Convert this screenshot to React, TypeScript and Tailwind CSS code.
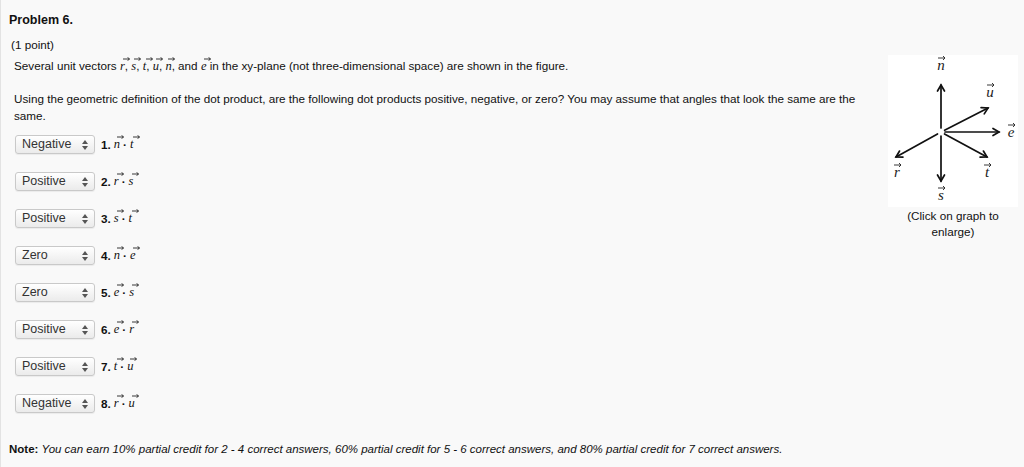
import React from 'react';

const Vec: React.FC<{ l: string }> = ({ l }) => (
  <span className="relative inline-block italic text-[12.5px] leading-none [font-family:'Liberation_Serif',serif]">
    {l}
    <svg className="absolute left-[3px] top-[-3px]" width="7" height="4" viewBox="0 0 7 4">
      <path d="M0 2 H6.5 M4.5 0.3 L6.5 2 L4.5 3.7" stroke="#222" strokeWidth="0.9" fill="none" />
    </svg>
  </span>
);

const Select: React.FC<{ value: string }> = ({ value }) => (
  <div className="relative flex h-[19px] w-[80px] items-center rounded-[3px] border border-[#c9c9c9] bg-gradient-to-b from-white to-[#ebebeb] pl-[6px] text-[12.5px] text-[#333] shadow-[0_1px_1px_rgba(0,0,0,0.06)]">
    {value}
    <svg className="absolute right-[6px] top-[4px]" width="6" height="10" viewBox="0 0 6 10">
      <path d="M0 4 L3 0 L6 4 Z" fill="#555" />
      <path d="M0 6 L3 10 L6 6 Z" fill="#555" />
    </svg>
  </div>
);

const items: [string, string, string][] = [
  ['Negative', 'n', 't'],
  ['Positive', 'r', 's'],
  ['Positive', 's', 't'],
  ['Zero', 'n', 'e'],
  ['Zero', 'e', 's'],
  ['Positive', 'e', 'r'],
  ['Positive', 't', 'u'],
  ['Negative', 'r', 'u'],
];

const Label: React.FC<{ x: number; y: number; l: string }> = ({ x, y, l }) => (
  <g>
    <text x={x} y={y} textAnchor="middle" fontSize="15" fontStyle="italic" fontFamily="'Liberation Serif', serif" fill="#222">
      {l}
    </text>
    <path d={`M${x - 3} ${y - 12} H${x + 4} M${x + 2} ${y - 14} L${x + 4} ${y - 12} L${x + 2} ${y - 10}`} stroke="#222" strokeWidth="0.9" fill="none" />
  </g>
);

const Arrow: React.FC<{ x: number; y: number }> = ({ x, y }) => {
  const cx = 53;
  const cy = 77;
  const dx = x - cx;
  const dy = y - cy;
  const len = Math.hypot(dx, dy);
  const ux = dx / len;
  const uy = dy / len;
  const sx = cx + ux * 4;
  const sy = cy + uy * 4;
  const h = 6;
  const w = 3.5;
  const bx = x - ux * h;
  const by = y - uy * h;
  const px = -uy * w;
  const py = ux * w;
  return (
    <g stroke="#111" strokeWidth="1.7" fill="none" strokeLinecap="round">
      <line x1={sx} y1={sy} x2={x} y2={y} />
      <path d={`M${bx + px} ${by + py} L${x} ${y} L${bx - px} ${by - py}`} />
    </g>
  );
};

const Figure = () => (
  <svg width="130" height="152" viewBox="0 0 130 152" className="bg-white">
    <Arrow x={53} y={30} />
    <Arrow x={100} y={53} />
    <Arrow x={111} y={77} />
    <Arrow x={8} y={102} />
    <Arrow x={53} y={126} />
    <Arrow x={99} y={102} />
    <Label x={53} y={15} l="n" />
    <Label x={102} y={42} l="u" />
    <Label x={123} y={82} l="e" />
    <Label x={9} y={122} l="r" />
    <Label x={53} y={145} l="s" />
    <Label x={99} y={122} l="t" />
  </svg>
);

export default function App() {
  return (
    <div className="h-[467px] w-full overflow-hidden border-l border-[#e3e3e3] bg-[#f9f9f9] text-[11.7px] text-[#111] [font-family:'Liberation_Sans',Arial,sans-serif]">
      <div className="pl-[8px] pt-[13px] text-[12.5px] font-bold leading-[14px]">Problem 6.</div>
      <div className="flex">
        <div className="w-[870px] shrink-0">
          <div className="mt-[11px] pl-[10px] leading-[14px]">(1 point)</div>
          <div className="mt-[7px] pl-[13px] leading-[14px]">
            Several unit vectors <Vec l="r" />, <Vec l="s" />, <Vec l="t" />, <Vec l="u" />, <Vec l="n" />, and <Vec l="e" /> in the xy-plane (not three-dimensional space) are shown in the figure.
          </div>
          <p className="mt-[17px] w-[862px] pl-[13px] leading-[17px]">
            Using the geometric definition of the dot product, are the following dot products positive, negative, or zero? You may assume that angles that look the same are the same.
          </p>
          <div className="mt-[11px] flex flex-col gap-[18px] pl-[14px]">
            {items.map(([v, a, b], i) => (
              <div key={i} className="flex items-center gap-[6px]">
                <Select value={v} />
                <span className="flex items-center gap-[3px]">
                  <b>{i + 1}.</b>
                  <Vec l={a} />
                  <span className="font-bold">·</span>
                  <Vec l={b} />
                </span>
              </div>
            ))}
          </div>
        </div>
        <div className="ml-[17px] mt-[28px] flex w-[130px] flex-col items-center">
          <Figure />
          <div className="mt-[1px] w-[140px] text-center leading-[16px]">
            (Click on graph to
            <br />
            enlarge)
          </div>
        </div>
      </div>
      <div className="mt-[29px] pl-[8px] text-[11.5px] leading-[14px]">
        <b>Note:</b> <i>You can earn 10% partial credit for 2 - 4 correct answers, 60% partial credit for 5 - 6 correct answers, and 80% partial credit for 7 correct answers.</i>
      </div>
    </div>
  );
}
